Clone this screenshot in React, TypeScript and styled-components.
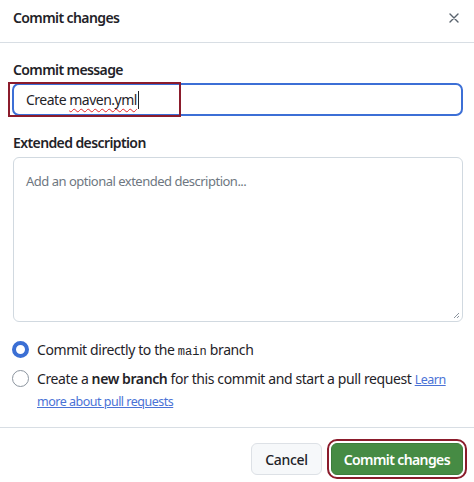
import React from 'react';
import styled, { createGlobalStyle } from 'styled-components';

const GlobalStyle = createGlobalStyle`
  * { box-sizing: border-box; }
  html, body {
    margin: 0;
    padding: 0;
    background: #ffffff;
  }
  body {
    font-family: 'Noto Sans', 'Open Sans', sans-serif;
    color: #1f2328;
    font-size: 14px;
    letter-spacing: -0.4px;
  }
`;

const Dialog = styled.div`
  width: 474px;
  height: 482px;
  background: #fff;
  display: flex;
  flex-direction: column;
  overflow: hidden;
`;

const Header = styled.div`
  flex: none;
  height: 43px;
  padding: 0 14px 6px 13px;
  display: flex;
  align-items: center;
  justify-content: space-between;
  border-bottom: 1px solid #d8dee4;
`;

const Title = styled.h2`
  margin: 0;
  font-size: 14px;
  font-weight: 600;
  line-height: 20px;
  letter-spacing: -0.6px;
`;

const CloseButton = styled.button`
  border: none;
  background: transparent;
  padding: 0;
  width: 12px;
  height: 12px;
  display: flex;
  align-items: center;
  justify-content: center;
  color: #59636e;
  cursor: pointer;
`;

const Body = styled.div`
  flex: none;
  padding: 17px 11px 15px 12px;
  display: flex;
  flex-direction: column;
`;

const Label = styled.label<{ $gap?: number; $below?: number }>`
  display: block;
  font-size: 14px;
  font-weight: 600;
  line-height: 20px;
  letter-spacing: -0.6px;
  margin: ${p => p.$gap ?? 0}px 0 ${p => p.$below ?? 4}px 1px;
`;

const InputWrap = styled.div`
  position: relative;
`;

const FakeInput = styled.div`
  height: 33px;
  border: 2px solid #3c6fd6;
  border-radius: 7px;
  padding: 0 12px;
  display: flex;
  align-items: center;
  font-size: 14px;
  letter-spacing: -0.5px;
`;

const Misspelled = styled.span`
  text-decoration: underline wavy #e0262a;
  text-decoration-thickness: 1px;
  text-underline-offset: 3px;
`;

const Caret = styled.span`
  display: inline-block;
  width: 1px;
  height: 18px;
  background: #1f2328;
  margin-left: 1px;
`;

const Annotation = styled.div`
  position: absolute;
  left: -4px;
  top: -1px;
  width: 173px;
  height: 35px;
  border: 2px solid #8b1c2c;
  pointer-events: none;
`;

const TextArea = styled.div`
  position: relative;
  height: 165px;
  margin-left: 1px;
  border: 1px solid #d1d9e0;
  border-radius: 6px;
  padding: 13px 12px;
  color: #6e7781;
  font-size: 13px;
  letter-spacing: -0.5px;
  line-height: 20px;
`;

const ResizeGrip = styled.svg`
  position: absolute;
  right: 2px;
  bottom: 2px;
`;

const Options = styled.div`
  margin-top: 17px;
  display: flex;
  flex-direction: column;
  gap: 7px;
`;

const OptionRow = styled.label`
  display: flex;
  align-items: flex-start;
  gap: 8px;
  line-height: 22px;
  font-size: 14px;
`;

const OptionText = styled.span`
  line-height: 22px;
`;

const Radio = styled.span<{ $checked?: boolean }>`
  flex: none;
  width: 17px;
  height: 17px;
  margin-top: 2px;
  border-radius: 50%;
  background: #fff;
  border: ${p => (p.$checked ? '4.5px solid #3b6fd4' : '1px solid #8c959f')};
`;

const Mono = styled.code`
  font-family: 'Liberation Mono', 'DejaVu Sans Mono', monospace;
  font-size: 12px;
  line-height: 1;
  letter-spacing: 0;
`;

const Strong = styled.strong`
  font-weight: 600;
`;

const Link = styled.a`
  color: #4a72d6;
  text-decoration: underline;
  font-size: 12.5px;
  line-height: 1;
  letter-spacing: -0.5px;
`;

const Footer = styled.div`
  flex: none;
  border-top: 1px solid #d8dee4;
  padding: 15px 11px 6px;
  display: flex;
  justify-content: flex-end;
  gap: 9px;
`;

const Button = styled.button<{ $primary?: boolean }>`
  height: 32px;
  padding: 0 ${p => (p.$primary ? 12 : 13)}px;
  border-radius: 6px;
  font-family: inherit;
  font-size: 14px;
  letter-spacing: ${p => (p.$primary ? -0.6 : -0.3)}px;
  font-weight: ${p => (p.$primary ? 600 : 500)};
  cursor: pointer;
  border: 1px solid ${p => (p.$primary ? '#3c7d3c' : '#dde1e6')};
  background: ${p => (p.$primary ? '#468b44' : '#f6f8fa')};
  color: ${p => (p.$primary ? '#ffffff' : '#1f2328')};
  ${p => p.$primary && `
    outline: 2px solid #8b1c2c;
    outline-offset: 2px;
  `}
`;

const App: React.FC = () => {
  return (
    <Dialog>
      <GlobalStyle />
      <Header>
        <Title>Commit changes</Title>
        <CloseButton aria-label="Close">
          <svg width="10" height="10" viewBox="0 0 10 10">
            <path d="M1 1l8 8M9 1l-8 8" stroke="currentColor" strokeWidth="1.4" strokeLinecap="round" />
          </svg>
        </CloseButton>
      </Header>
      <Body>
        <Label $below={3}>Commit message</Label>
        <InputWrap>
          <FakeInput>
            Create&nbsp;<Misspelled>maven.yml</Misspelled>
            <Caret />
          </FakeInput>
          <Annotation />
        </InputWrap>
        <Label $gap={17}>Extended description</Label>
        <TextArea>
          Add an optional extended description...
          <ResizeGrip width="8" height="8" viewBox="0 0 8 8">
            <path d="M7 2L2 7M7 5L5 7" stroke="#8c959f" strokeWidth="1" />
          </ResizeGrip>
        </TextArea>
        <Options>
          <OptionRow>
            <Radio $checked />
            <OptionText>
              Commit directly to the <Mono>main</Mono> branch
            </OptionText>
          </OptionRow>
          <OptionRow>
            <Radio />
            <OptionText>
              Create a <Strong>new branch</Strong> for this commit and start a pull request{' '}
              <Link href="#">Learn more about pull requests</Link>
            </OptionText>
          </OptionRow>
        </Options>
      </Body>
      <Footer>
        <Button>Cancel</Button>
        <Button $primary>Commit changes</Button>
      </Footer>
    </Dialog>
  );
};

export default App;
